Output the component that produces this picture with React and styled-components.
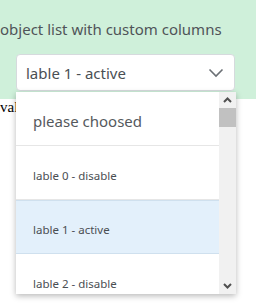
import React from "react";
import styled, { createGlobalStyle } from "styled-components";

const Global = createGlobalStyle`
  html, body { margin: 0; padding: 0; background: #fff; }
  body { font-family: "Noto Sans", "Open Sans", sans-serif; overflow: hidden; }
`;

const Page = styled.div`
  position: relative;
  width: 256px;
  height: 307px;
  overflow: hidden;
`;

const Panel = styled.section`
  background: #cff0da;
  height: 99px;
  display: flex;
  flex-direction: column;
  padding: 0 20px 0 16px;
`;

const Title = styled.div`
  margin: 19px 0 0 -16px;
  font-size: 15px;
  line-height: 20px;
  color: #4f5458;
  white-space: nowrap;
`;

const SelectBox = styled.div`
  margin-top: 15px;
  width: 219px;
  height: 37px;
  box-sizing: border-box;
  background: #fff;
  border: 1px solid #d6dadd;
  border-radius: 4px;
  display: flex;
  align-items: center;
  justify-content: space-between;
  padding: 0 10px 0 9px;
  font-size: 15px;
  color: #4a4f54;
`;

const Below = styled.p`
  margin: 0;
  font-family: "Liberation Serif", serif;
  font-size: 15px;
  line-height: 15px;
  padding-top: 1px;
  color: #000;
  white-space: nowrap;
`;

const Popup = styled.div`
  position: absolute;
  left: 16px;
  top: 92px;
  width: 220px;
  height: 202px;
  background: #fff;
  box-shadow: 0 2px 6px rgba(0, 0, 0, 0.28);
  display: flex;
  overflow: hidden;
`;

const List = styled.ul`
  flex: 1;
  margin: 0;
  padding: 0;
  list-style: none;
  overflow: hidden;
`;

const Item = styled.li`
  height: 54px;
  box-sizing: border-box;
  display: flex;
  align-items: center;
  padding: ${(p) => (p.$header ? "5px 0 0 17px" : "5px 0 0 17px")};
  font-size: ${(p) => (p.$header ? "15px" : "11.5px")};
  color: ${(p) => (p.$header ? "#55595d" : "#4a4e52")};
  background: ${(p) => (p.$active ? "#e3f0fb" : "#fff")};
  border-bottom: 1px solid ${(p) => (p.$active ? "#cfe0ee" : "#e6e6e6")};
  box-shadow: ${(p) => (p.$active ? "inset 0 1px 0 #cfe0ee" : "none")};
`;

const Scrollbar = styled.div`
  width: 17px;
  background: #f1f1f1;
  display: flex;
  flex-direction: column;
`;

const ArrowBtn = styled.div`
  height: 16px;
  display: flex;
  align-items: center;
  justify-content: center;
`;

const Thumb = styled.div`
  height: 19px;
  background: #c1c1c1;
`;

const Spacer = styled.div`
  flex: 1;
`;

const Chevron = () => (
  <svg width="16" height="10" viewBox="0 0 16 10">
    <path d="M1.5 1.5 L8 8 L14.5 1.5" fill="none" stroke="#6b7075" strokeWidth="1.6" />
  </svg>
);

const SmallArrow = ({ up }) => (
  <svg width="9" height="6" viewBox="0 0 9 6">
    <path
      d={up ? "M1 5 L4.5 1.5 L8 5" : "M1 1 L4.5 4.5 L8 1"}
      fill="none"
      stroke="#505050"
      strokeWidth="2"
    />
  </svg>
);

const options = [
  { label: "lable 0 - disable" },
  { label: "lable 1 - active", active: true },
  { label: "lable 2 - disable" },
];

export default function App() {
  return (
    <Page>
      <Global />
      <Panel>
        <Title>object list with custom columns</Title>
        <SelectBox>
          <span>lable 1 - active</span>
          <Chevron />
        </SelectBox>
      </Panel>
      <Below>value</Below>
      <Popup>
        <List>
          <Item $header>please choosed</Item>
          {options.map((o) => (
            <Item key={o.label} $active={o.active}>
              {o.label}
            </Item>
          ))}
        </List>
        <Scrollbar>
          <ArrowBtn>
            <SmallArrow up />
          </ArrowBtn>
          <Thumb />
          <Spacer />
          <ArrowBtn>
            <SmallArrow />
          </ArrowBtn>
        </Scrollbar>
      </Popup>
    </Page>
  );
}
